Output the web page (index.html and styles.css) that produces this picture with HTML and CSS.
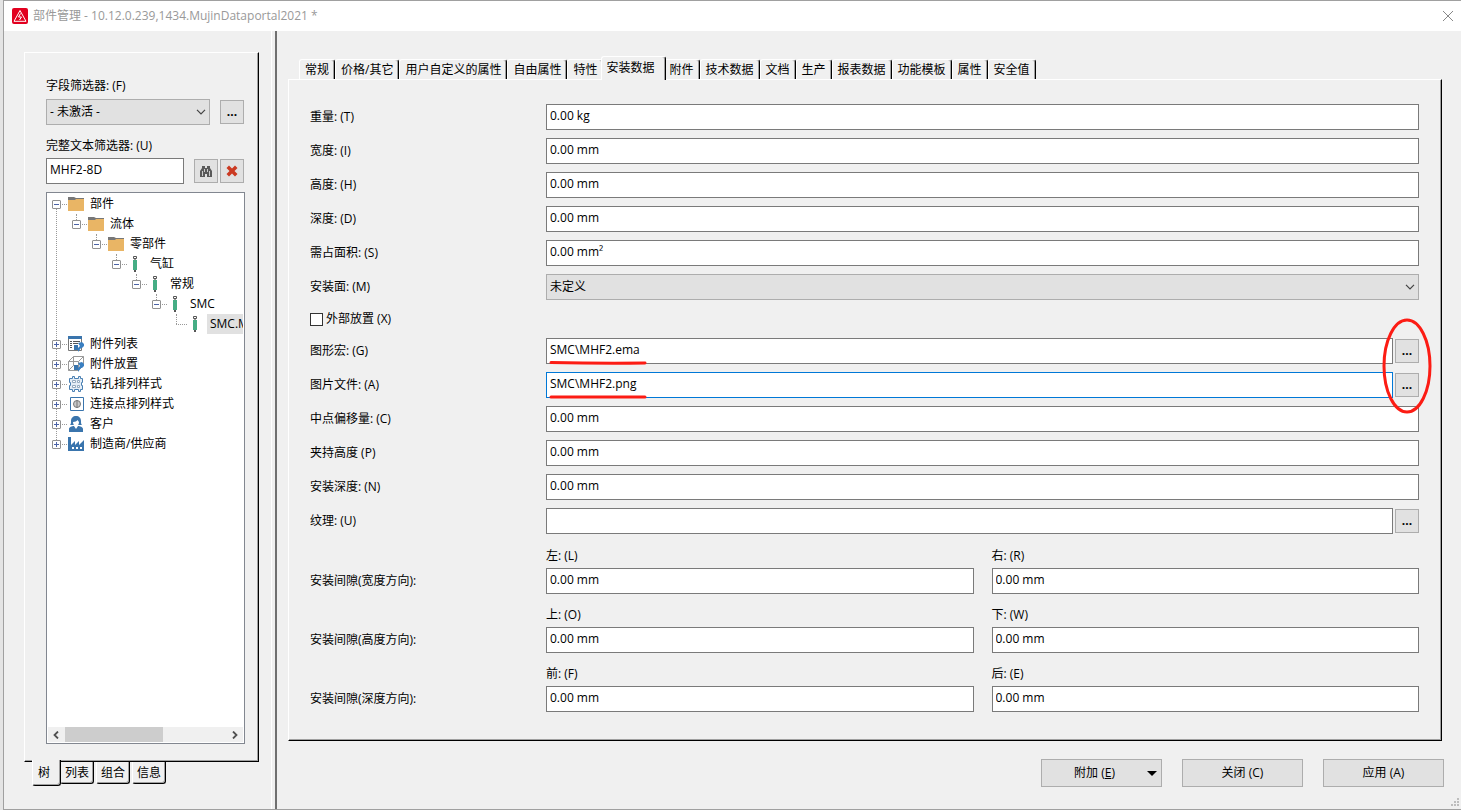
FILE: index.html
```html
<!DOCTYPE html>
<html lang="zh-CN">
<head>
    <meta charset="UTF-8">
    <meta name="viewport" content="width=device-width, initial-scale=1.0">
    <title>部件管理</title>
    <link rel="stylesheet" href="styles.css">
</head>
<body>
    <!-- Shared icons -->
    <svg class="defs" width="0" height="0">
        <symbol id="chevron" viewBox="0 0 10 6"><path d="M1 0.8l4 4 4-4" fill="none" stroke="#444" stroke-width="1.2"/></symbol>
        <symbol id="folder" viewBox="0 0 16 16"><path d="M0 1h6l2 1h8v2H0z" fill="#777"/><path d="M0 4h7l1-1h8v12H0z" fill="#e9b565"/></symbol>
        <symbol id="cylinder" viewBox="0 0 16 16"><path d="M5.500 0.500h3v2h-3z" fill="#fff" stroke="#555"/><path d="M6 3h2v1H6z" fill="#999"/><path d="M5 4h4v10H5z" fill="#45ad85"/><path d="M6 14h2v2H6z" fill="#555"/></symbol>
    </svg>

    <div class="window">
        <div class="titlebar">
            <svg class="logo" width="16" height="16" viewBox="0 0 16 16"><rect width="16" height="16" rx="2" fill="#e2001f"/><path d="M8 2.500L14 13.300H2z" fill="none" stroke="#fff"/><path d="M8.500 5.500L6.500 9h3L7.500 12" fill="none" stroke="#fff"/></svg>
            <span class="title">部件管理 - 10.12.0.239,1434.MujinDataportal2021 *</span>
            <button class="close" aria-label="关闭"><svg width="12" height="12" viewBox="0 0 12 12"><path d="M1 1l10 10M11 1L1 11" stroke="#888" fill="none"/></svg></button>
        </div>

        <div class="main">
            <div class="sidebar">
                <div class="panel side-panel">
                    <label class="side-label" for="field-filter">字段筛选器: (F)</label>
                    <div class="side-row">
                        <div class="select-box">
                            <select id="field-filter"><option>- 未激活 -</option></select>
                            <svg class="chevron" width="10" height="6"><use href="#chevron"/></svg>
                        </div>
                        <button class="small-btn">...</button>
                    </div>
                    <label class="side-label second" for="text-filter">完整文本筛选器: (U)</label>
                    <div class="side-row search-row">
                        <input type="text" id="text-filter" value="MHF2-8D">
                        <div class="btn-pair">
                            <button class="small-btn" aria-label="搜索"><svg width="12" height="12" viewBox="0 0 12 12"><path d="M2 1h3v2h2V1h3v2l2 3v6H7V9H5v3H0V6l2-3z" fill="#5a5a5a"/><path d="M2.500 6v5M4.500 4v3M7.500 4v3M9.500 6v5" stroke="#ccc"/></svg></button>
                            <button class="small-btn" aria-label="清除"><svg width="12" height="12" viewBox="0 0 12 12"><path d="M3 0.500L6 3.500 9 0.500 11.500 3 8.500 6 11.500 9 9 11.500 6 8.500 3 11.500 0.500 9 3.500 6 0.500 3z" fill="#cb3a22"/></svg></button>
                        </div>
                    </div>

                    <div class="tree-box">
                        <ul class="tree">
                            <li>
                                <div class="node"><i class="toggle"></i><svg class="icon"><use href="#folder"/></svg><span>部件</span></div>
                                <ul>
                                    <li>
                                        <div class="node"><i class="toggle"></i><svg class="icon"><use href="#folder"/></svg><span>流体</span></div>
                                        <ul>
                                            <li>
                                                <div class="node"><i class="toggle"></i><svg class="icon"><use href="#folder"/></svg><span>零部件</span></div>
                                                <ul>
                                                    <li>
                                                        <div class="node"><i class="toggle"></i><svg class="icon"><use href="#cylinder"/></svg><span>气缸</span></div>
                                                        <ul>
                                                            <li>
                                                                <div class="node"><i class="toggle"></i><svg class="icon"><use href="#cylinder"/></svg><span>常规</span></div>
                                                                <ul>
                                                                    <li>
                                                                        <div class="node"><i class="toggle"></i><svg class="icon"><use href="#cylinder"/></svg><span>SMC</span></div>
                                                                        <ul>
                                                                            <li>
                                                                                <div class="node leaf"><svg class="icon"><use href="#cylinder"/></svg><span class="selected">SMC.MHF2-8D</span></div>
                                                                            </li>
                                                                        </ul>
                                                                    </li>
                                                                </ul>
                                                            </li>
                                                        </ul>
                                                    </li>
                                                </ul>
                                            </li>
                                        </ul>
                                    </li>
                                </ul>
                            </li>
                            <li>
                                <div class="node"><i class="toggle plus"></i><svg class="icon" viewBox="0 0 16 16"><path d="M0.500 0.500h13v14H0.500z" fill="#fff" stroke="#777"/><path d="M0 0h14v3H0z" fill="#3a75ad"/><path d="M2 5.500h2M2 7.500h2M2 9.500h2M2 11.500h2M5 5.500h7M5 7.500h5" stroke="#555"/><path d="M6 9h4v5H6z" fill="#3a75ad"/><path d="M10 7l4-1 2 2v2l-2 2h-1l-3 4v-4l2-2z" fill="#3a7fc1"/></svg><span>附件列表</span></div>
                            </li>
                            <li>
                                <div class="node"><i class="toggle plus"></i><svg class="icon" viewBox="0 0 16 16"><path d="M0.500 5.500l5-5h10v9l-5 5h-10zM0.500 5.500h10v9M10.500 5.500l5-5M5.500 0.500v9h5M0.500 14.500l5-5" fill="none" stroke="#999"/><path d="M6 9h4v5H6z" fill="#3a75ad"/><path d="M10 7l4-1 2 2v2l-2 2h-1l-3 4v-4l2-2z" fill="#3a7fc1"/></svg><span>附件放置</span></div>
                            </li>
                            <li>
                                <div class="node"><i class="toggle plus"></i><svg class="icon" viewBox="0 0 16 16"><path d="M4.500 0.500h2v2h4v-2h2v2h2v4h-1v3h1v4h-2v2h-2v-2h-4v2h-2v-2h-3v-4h1v-3h-1v-4h3z" fill="#e4edf6" stroke="#4a80b3"/><path d="M4.500 4.500h3v2h-3zM9.500 4.500h2v2h-2zM4.500 9.500h3v2h-3zM9.500 9.500h2v2h-2z" fill="#fff" stroke="#93a9be"/></svg><span>钻孔排列样式</span></div>
                            </li>
                            <li>
                                <div class="node"><i class="toggle plus"></i><svg class="icon" viewBox="0 0 16 16"><path d="M2.500 1.500h13v13h-13z" fill="#fff" stroke="#3a75ad"/><circle cx="9" cy="8" r="3.500" fill="#c8c8c8" stroke="#777"/><path d="M9 4v8" stroke="#777"/></svg><span>连接点排列样式</span></div>
                            </li>
                            <li>
                                <div class="node"><i class="toggle plus"></i><svg class="icon" viewBox="0 0 16 16"><path d="M8 0c3 0 5 2 5 5 0 2 0 3 1 4H2c1-1 1-2 1-4 0-3 2-5 5-5z" fill="#3a75ad"/><path d="M5 6c2 0 4-1 4.500-2L11 6c0 2-1 4-3 4S5 8 5 6z" fill="#fff"/><path d="M1 16v-3c0-2 3-3 5-3l2 3 2-3c2 0 5 1 5 3v3z" fill="#3a75ad"/></svg><span>客户</span></div>
                            </li>
                            <li>
                                <div class="node"><i class="toggle plus"></i><svg class="icon" viewBox="0 0 16 16"><path d="M0 1h3v8l4-4v4l4-4v4l5-5v11H0z" fill="#3a75ad"/><path d="M4 11h2v2H4zM8 11h2v2H8zM12 11h2v2h-2z" fill="#fff"/></svg><span>制造商/供应商</span></div>
                            </li>
                        </ul>
                        <div class="scrollbar">
                            <svg width="6" height="8" viewBox="0 0 6 8"><path d="M5 0.500L1.500 4 5 7.500" fill="none" stroke="#505050" stroke-width="1.800"/></svg>
                            <div class="track"><div class="thumb"></div></div>
                            <svg width="6" height="8" viewBox="0 0 6 8"><path d="M1 0.500L4.500 4 1 7.500" fill="none" stroke="#505050" stroke-width="1.800"/></svg>
                        </div>
                    </div>
                </div>
                <div class="side-tabs">
                    <button class="active">树</button>
                    <button>列表</button>
                    <button>组合</button>
                    <button>信息</button>
                </div>
            </div>

            <div class="content">
                <div class="tabs">
                    <button>常规</button>
                    <button>价格/其它</button>
                    <button>用户自定义的属性</button>
                    <button>自由属性</button>
                    <button>特性</button>
                    <button class="active">安装数据</button>
                    <button>附件</button>
                    <button>技术数据</button>
                    <button>文档</button>
                    <button>生产</button>
                    <button>报表数据</button>
                    <button>功能模板</button>
                    <button>属性</button>
                    <button>安全值</button>
                </div>
                <div class="panel form">
                    <div class="row"><label for="weight">重量: (T)</label><input type="text" id="weight" value="0.00 kg"></div>
                    <div class="row"><label for="width">宽度: (I)</label><input type="text" id="width" value="0.00 mm"></div>
                    <div class="row"><label for="height">高度: (H)</label><input type="text" id="height" value="0.00 mm"></div>
                    <div class="row"><label for="depth">深度: (D)</label><input type="text" id="depth" value="0.00 mm"></div>
                    <div class="row"><label for="space">需占面积: (S)</label><input type="text" id="space" value="0.00 mm²"></div>
                    <div class="row">
                        <label for="surface">安装面: (M)</label>
                        <div class="select-box">
                            <select id="surface"><option>未定义</option></select>
                            <svg class="chevron" width="10" height="6"><use href="#chevron"/></svg>
                        </div>
                    </div>
                    <div class="check-row"><input type="checkbox" id="external"><label for="external">外部放置 (X)</label></div>
                    <div class="row">
                        <label for="macro">图形宏: (G)</label>
                        <div class="browse">
                            <input type="text" id="macro" value="SMC\MHF2.ema">
                            <button class="small-btn">...</button>
                            <svg class="underline" width="98" height="4" viewBox="0 0 98 4"><path d="M2 1.500Q50 2.500 96 2" fill="none" stroke="#fc1c14" stroke-width="3" stroke-linecap="round"/></svg>
                            <svg class="circle" width="50" height="96" viewBox="0 0 50 96"><ellipse cx="25" cy="48" rx="23" ry="46" fill="none" stroke="#fc1c14" stroke-width="3"/></svg>
                        </div>
                    </div>
                    <div class="row">
                        <label for="image">图片文件: (A)</label>
                        <div class="browse">
                            <input type="text" id="image" class="focused" value="SMC\MHF2.png">
                            <button class="small-btn">...</button>
                            <svg class="underline" width="98" height="4" viewBox="0 0 98 4"><path d="M2 2H96" fill="none" stroke="#fc1c14" stroke-width="3" stroke-linecap="round"/></svg>
                        </div>
                    </div>
                    <div class="row"><label for="offset">中点偏移量: (C)</label><input type="text" id="offset" value="0.00 mm"></div>
                    <div class="row"><label for="clamp">夹持高度 (P)</label><input type="text" id="clamp" value="0.00 mm"></div>
                    <div class="row"><label for="mount-depth">安装深度: (N)</label><input type="text" id="mount-depth" value="0.00 mm"></div>
                    <div class="row">
                        <label for="texture">纹理: (U)</label>
                        <div class="browse">
                            <input type="text" id="texture">
                            <button class="small-btn">...</button>
                        </div>
                    </div>

                    <!-- Mounting clearance -->
                    <div class="clearance">
                        <span class="name">安装间隙(宽度方向):</span>
                        <div class="pair"><label for="left">左: (L)</label><input type="text" id="left" value="0.00 mm"></div>
                        <div class="pair"><label for="right">右: (R)</label><input type="text" id="right" value="0.00 mm"></div>
                        <span class="name">安装间隙(高度方向):</span>
                        <div class="pair"><label for="top">上: (O)</label><input type="text" id="top" value="0.00 mm"></div>
                        <div class="pair"><label for="bottom">下: (W)</label><input type="text" id="bottom" value="0.00 mm"></div>
                        <span class="name">安装间隙(深度方向):</span>
                        <div class="pair"><label for="front">前: (F)</label><input type="text" id="front" value="0.00 mm"></div>
                        <div class="pair"><label for="back">后: (E)</label><input type="text" id="back" value="0.00 mm"></div>
                    </div>
                </div>
                <div class="footer">
                    <button class="btn extra">附加 (<u>E</u>)<span class="arrow"></span></button>
                    <button class="btn">关闭 (C)</button>
                    <button class="btn">应用 (A)</button>
                </div>
                <svg class="grip" width="9" height="9" viewBox="0 0 9 9"><path d="M6 0h2v2H6zM3 3h2v2H3zM6 3h2v2H6zM0 6h2v2H0zM3 6h2v2H3zM6 6h2v2H6z" fill="#bdbdbd"/></svg>
            </div>
        </div>
    </div>
</body>
</html>
```
FILE: styles.css
```css
* {
    box-sizing: border-box;
}
body {
    margin: 0;
    background-color: #e4e4e4;
    font-family: "Open Sans", "Noto Sans CJK SC", sans-serif;
    font-size: 12px;
    line-height: 18px;
    color: #000;
}
input, select, button {
    font: inherit;
    color: inherit;
    border-radius: 0;
    margin: 0;
}
.defs {
    position: absolute;
}
.window {
    display: flex;
    flex-direction: column;
    min-height: 100vh;
    margin-left: 3px;
    border: 1px solid #a0a0a0;
    border-right: none;
    background-color: #f0f0f0;
}
.titlebar {
    display: flex;
    align-items: center;
    height: 30px;
    padding: 0 7px 0 8px;
    background-color: #fff;
    color: #999;
}
.logo {
    margin-right: 5px;
}
.title {
    flex: 1;
}
.close {
    display: flex;
    padding: 0;
    border: none;
    background: none;
}
.main {
    display: flex;
    flex: 1;
}
/* raised box of the classic tab control */
.panel {
    border: 1px solid #fff;
    border-right-color: #000;
    border-bottom-color: #000;
    box-shadow: inset -1px -1px 0 #a0a0a0;
}

/* left side */
.sidebar {
    display: flex;
    flex-direction: column;
    flex: none;
    width: 273px;
    padding: 21px 14px 22px 20px;
    border-right: 2px solid #707070;
    box-shadow: inset -3px 0 0 #f0f0f0, inset -4px 0 0 #fff;
}
.side-panel {
    display: flex;
    flex-direction: column;
    flex: 1;
    width: 235px;
    padding: 24px 13px 17px 21px;
}
.side-label {
    margin-bottom: 4px;
}
.side-label.second {
    margin: 12px 0 3px;
}
.side-row {
    display: flex;
    align-items: center;
    gap: 10px;
    height: 26px;
    margin-right: 1px;
}
.side-row .select-box, .side-row input {
    flex: 1;
}
.search-row {
    margin-bottom: 8px;
}
.btn-pair {
    display: flex;
    gap: 2px;
}
input[type="text"] {
    width: 100%;
    min-width: 0;
    height: 26px;
    padding: 0 3px 3px;
    border: 1px solid #7a7a7a;
    background-color: #fff;
    outline: none;
}
input[type="text"].focused {
    border-color: #0078d7;
}
.select-box {
    position: relative;
}
.select-box select {
    display: block;
    appearance: none;
    width: 100%;
    height: 26px;
    padding: 0 20px 0 3px;
    border: 1px solid #adadad;
    background-color: #e1e1e1;
}
.chevron {
    position: absolute;
    right: 4px;
    top: 10px;
    pointer-events: none;
}
.small-btn {
    display: flex;
    justify-content: center;
    align-items: center;
    flex: none;
    width: 24px;
    height: 24px;
    padding: 0;
    border: 1px solid #adadad;
    background-color: #e1e1e1;
    font-weight: 700;
}

/* tree */
.tree-box {
    display: flex;
    flex-direction: column;
    flex: 1;
    padding: 1px;
    border: 1px solid #828790;
    background-color: #fff;
}
.tree {
    flex: 1;
    overflow: hidden;
    padding-left: 4px;
}
.tree, .tree ul {
    margin: 0;
    list-style: none;
}
.tree ul {
    padding-left: 20px;
}
.tree li {
    position: relative;
}
.tree li:not(:last-child)::before, .tree ul > li::after {
    content: "";
    position: absolute;
    left: 4px;
    border-left: 1px dotted #999;
}
.tree li:not(:last-child)::before {
    top: 10px;
    bottom: -10px;
}
.tree ul > li::after {
    top: 0;
    height: 10px;
}
.node {
    position: relative;
    display: flex;
    align-items: center;
    height: 20px;
    padding-left: 16px;
    white-space: nowrap;
}
.node::before {
    content: "";
    position: absolute;
    left: 4px;
    top: 10px;
    width: 11px;
    border-top: 1px dotted #999;
}
.toggle {
    position: absolute;
    left: 0;
    top: 6px;
    z-index: 1;
    width: 9px;
    height: 9px;
    border: 1px solid #919191;
    border-radius: 1px;
    background: linear-gradient(#4b63a7, #4b63a7) center / 5px 1px no-repeat #fff;
}
.toggle.plus {
    background: linear-gradient(#4b63a7, #4b63a7) center / 5px 1px no-repeat, linear-gradient(#4b63a7, #4b63a7) center / 1px 5px no-repeat #fff;
}
.icon {
    flex: none;
    width: 16px;
    height: 16px;
    margin-right: 3px;
}
.node span {
    padding: 0 3px;
    line-height: 20px;
}
.node .selected {
    background-color: #e1e1e1;
}
.scrollbar {
    display: flex;
    align-items: center;
    gap: 6px;
    height: 15px;
    padding: 0 5px;
    background-color: #f0f0f0;
}
.track {
    flex: 1;
    height: 15px;
}
.thumb {
    width: 61%;
    height: 15px;
    background-color: #cdcdcd;
}
.side-tabs {
    display: flex;
    align-items: flex-start;
    gap: 2px;
    height: 25px;
    padding-left: 8px;
}
.side-tabs button {
    height: 22px;
    padding: 0 4px;
    border: 1px solid #000;
    border-top: none;
    border-left-color: #fff;
    border-radius: 0 0 3px 3px;
    background-color: #f0f0f0;
    box-shadow: inset -1px -1px 0 #a0a0a0;
}
.side-tabs .active {
    position: relative;
    height: 26px;
    margin-top: -2px;
    margin-right: -3px;
    padding: 0 10px 0 5px;
}

/* right side */
.content {
    position: relative;
    display: flex;
    flex-direction: column;
    flex: 1;
    min-width: 0;
    padding: 28px 17px 22px 11px;
}
.tabs {
    display: flex;
    align-items: flex-end;
    height: 20px;
    padding-left: 11px;
}
.tabs button {
    flex: none;
    height: 20px;
    padding: 0 5px;
    border: 1px solid #fff;
    border-right-color: #000;
    border-bottom: none;
    border-radius: 3px 3px 0 0;
    background-color: #f0f0f0;
    box-shadow: inset -1px 0 0 #a0a0a0;
}
.tabs .active {
    position: relative;
    height: 24px;
    margin: 0 -3px -1px -2px;
    padding: 0 11px 2px 4px;
}
.form {
    display: flex;
    flex-direction: column;
    flex: 1;
    gap: 8px;
    margin-right: 2px;
    padding: 24px 22px 26px 21px;
}
.row {
    display: grid;
    grid-template-columns: 236px 1fr;
    align-items: center;
}
.check-row {
    display: flex;
    align-items: center;
    gap: 3px;
    height: 22px;
}
.check-row input {
    appearance: none;
    width: 13px;
    height: 13px;
    border: 1px solid #333;
    background-color: #fff;
}
.browse {
    position: relative;
    display: flex;
    align-items: center;
    gap: 2px;
}
/* red marker strokes */
.underline {
    position: absolute;
    left: 3px;
    top: 23px;
}
.circle {
    position: absolute;
    right: -13px;
    top: -20px;
    z-index: 2;
    pointer-events: none;
}
.clearance {
    display: grid;
    grid-template-columns: 236px 1fr 1fr;
    row-gap: 8px;
    margin-top: 1px;
}
.clearance .name {
    align-self: end;
    line-height: 26px;
}
.pair label {
    display: block;
    line-height: 25px;
}
.pair input {
    display: block;
}
.pair + .pair {
    margin-left: 9px;
}
.name + .pair {
    margin-right: 9px;
}
.footer {
    display: flex;
    justify-content: flex-end;
    gap: 20px;
    margin-top: 18px;
}
.btn {
    width: 121px;
    height: 28px;
    padding: 0;
    border: 1px solid #adadad;
    background-color: #e1e1e1;
}
.extra {
    position: relative;
    padding-right: 14px;
}
.arrow {
    position: absolute;
    right: 4px;
    top: 11px;
    border: 5px solid transparent;
    border-top-color: #000;
    border-bottom: none;
}
.grip {
    position: absolute;
    right: 1px;
    bottom: 2px;
}
```
